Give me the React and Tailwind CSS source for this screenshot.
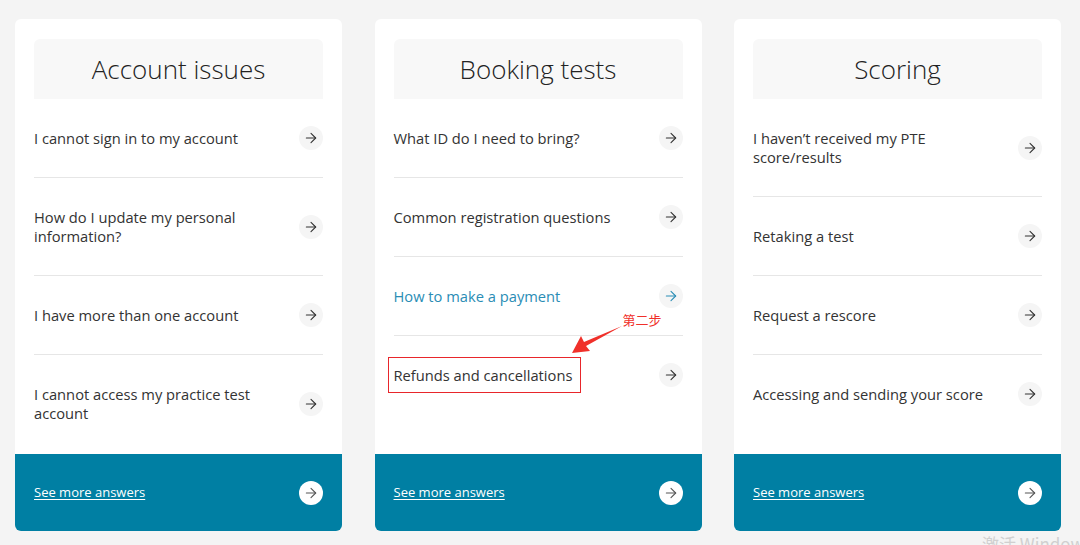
import { ArrowRight } from 'lucide-react'

const columns = [
  {
    title: 'Account issues',
    items: [
      { text: 'I cannot sign in to my account' },
      { text: 'How do I update my personal information?' },
      { text: 'I have more than one account' },
      { text: 'I cannot access my practice test account' },
    ],
  },
  {
    title: 'Booking tests',
    items: [
      { text: 'What ID do I need to bring?' },
      { text: 'Common registration questions' },
      { text: 'How to make a payment', active: true },
      { text: 'Refunds and cancellations', marked: true },
    ],
  },
  {
    title: 'Scoring',
    items: [
      { text: 'I haven\u2019t received my PTE score/results' },
      { text: 'Retaking a test' },
      { text: 'Request a rescore' },
      { text: 'Accessing and sending your score' },
    ],
  },
]

function Row({ item, last }) {
  return (
    <div className={`flex items-center justify-between ${last ? '' : 'border-b border-[#e6e6e6]'}`}>
      <div className="pt-[30px] pb-[29px]">
        <span
          className={`relative block max-w-[245px] text-[14.7px] leading-[19px] ${item.active ? 'text-[#2a8db5]' : 'text-[#333]'}`}
        >
          {item.text}
          {item.marked && (
            <>
              <span className="absolute -left-[6px] -top-[9px] h-[36px] w-[193px] border border-[#e8262b]" />
              <svg className="absolute left-[174px] -top-[44px]" width="56" height="34" viewBox="0 0 56 34">
                <polygon points="4,31 13,14 16,20 54,4 18,24 22,29" fill="#f0302a" />
              </svg>
              <span className="absolute left-[229px] -top-[56px] whitespace-nowrap text-[13px] text-[#f0302a] [font-family:'Noto_Sans_CJK_SC',sans-serif]">
                第二步
              </span>
            </>
          )}
        </span>
      </div>
      <span className={`flex h-6 w-6 shrink-0 items-center justify-center rounded-full bg-[#f5f5f5] ${item.active ? 'text-[#2a8db5]' : 'text-[#333]'}`}>
        <ArrowRight size={16} strokeWidth={1.6} />
      </span>
    </div>
  )
}

function Card({ col }) {
  return (
    <div className="flex w-[327px] shrink-0 flex-col overflow-hidden rounded-[6px] bg-white">
      <div className="flex-1 px-[19px] pt-[20px]">
        <div className="flex h-[60px] items-center justify-center rounded-t-[6px] bg-[#f8f8f8]">
          <h2 className="text-[26px] font-light text-[#222]">{col.title}</h2>
        </div>
        {col.items.map((item, i) => (
          <Row key={i} item={item} last={i === col.items.length - 1} />
        ))}
      </div>
      <div className="flex h-[77px] shrink-0 items-center justify-between bg-[#007fa3] px-[19px]">
        <a href="#" className="text-[13px] text-white underline underline-offset-2">
          See more answers
        </a>
        <span className="flex h-6 w-6 items-center justify-center rounded-full bg-white text-[#555]">
          <ArrowRight size={16} strokeWidth={1.6} />
        </span>
      </div>
    </div>
  )
}

export default function App() {
  return (
    <div className="relative h-[545px] w-[1080px] overflow-hidden bg-[#f4f4f4] [font-family:'Open_Sans',sans-serif]">
      <div className="flex h-[531px] gap-[32.5px] pl-[15px] pt-[19px]">
        {columns.map((col) => (
          <Card key={col.title} col={col} />
        ))}
      </div>
      <div className="absolute left-[982px] top-[534px] whitespace-nowrap text-[17px] leading-[20px] text-[#d0d0d0] [font-family:'Noto_Sans_CJK_SC',sans-serif]">
        激活 Windows
      </div>
    </div>
  )
}
